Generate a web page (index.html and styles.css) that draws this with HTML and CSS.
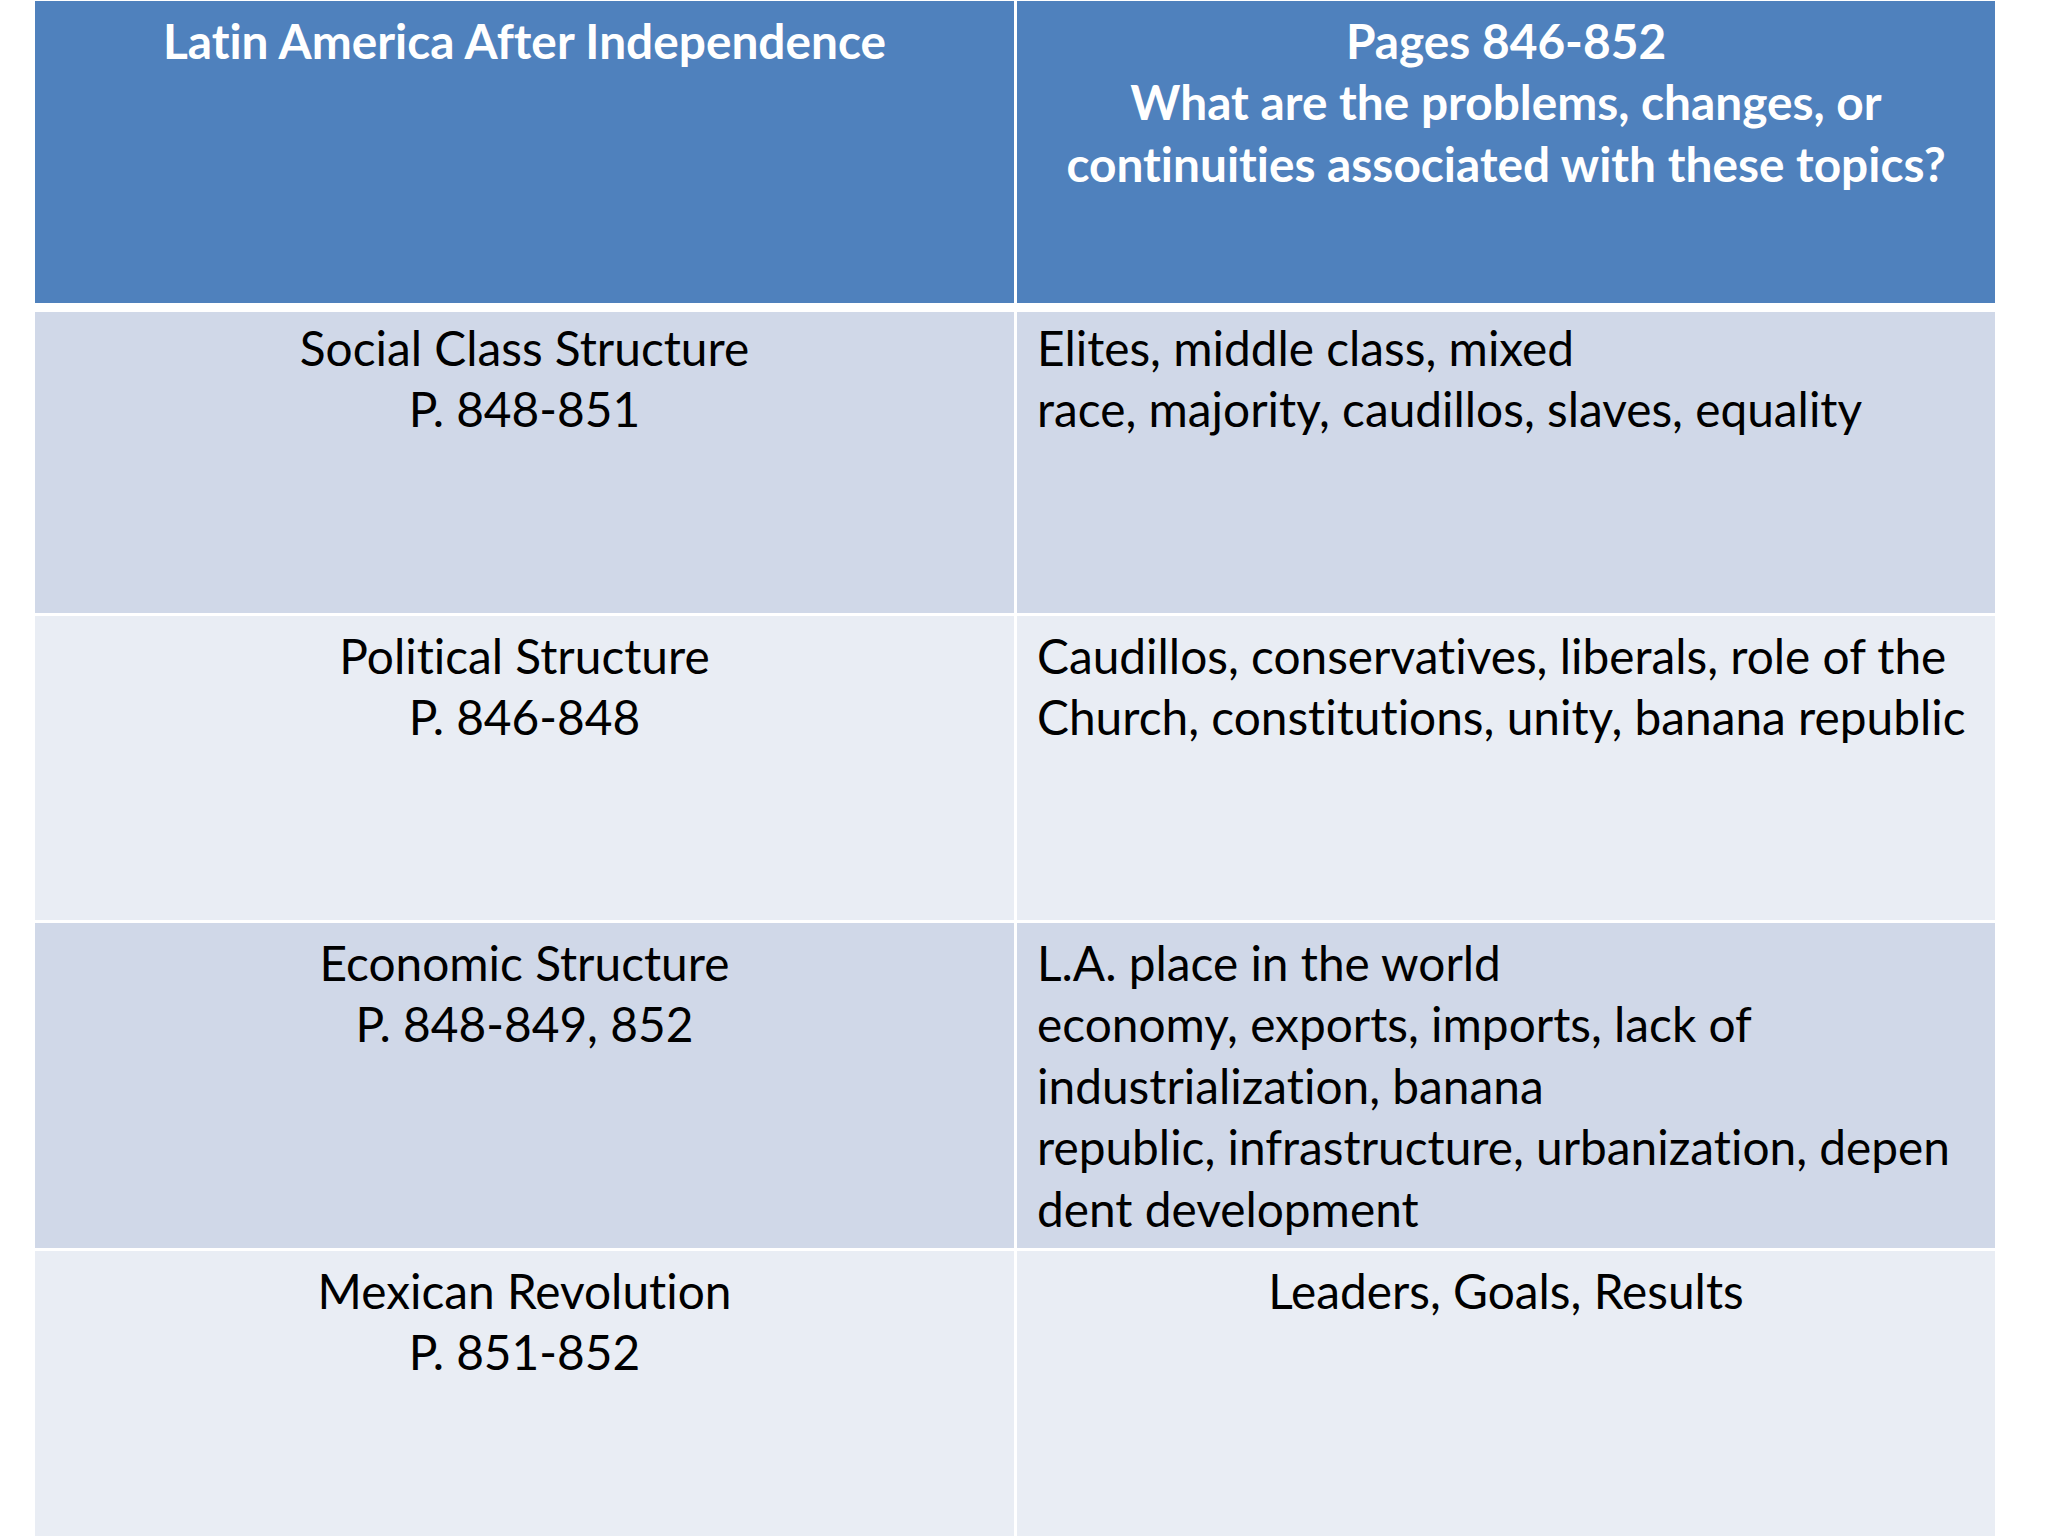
FILE: index.html
```html
<!DOCTYPE html>
<html lang="en">
<head>
<meta charset="utf-8">
<title>Latin America After Independence</title>
<link rel="stylesheet" href="styles.css">
</head>
<body>
<div class="slide">
  <div class="grid">
    <div class="row row-head">
      <div class="cell center">Latin America After Independence</div>
      <div class="cell center">Pages 846-852<br>What are the problems, changes, or<br>continuities associated with these topics?</div>
    </div>
    <div class="row row-odd row-first">
      <div class="cell center">Social Class Structure<br>P. 848-851</div>
      <div class="cell">Elites, middle class, mixed<br>race, majority, caudillos, slaves, equality</div>
    </div>
    <div class="row row-even row-two">
      <div class="cell center">Political Structure<br>P. 846-848</div>
      <div class="cell">Caudillos, conservatives, liberals, role of the<br>Church, constitutions, unity, banana republic</div>
    </div>
    <div class="row row-odd row-three">
      <div class="cell center">Economic Structure<br>P. 848-849, 852</div>
      <div class="cell">L.A. place in the world<br>economy, exports, imports, lack of<br>industrialization, banana<br>republic, infrastructure, urbanization, depen<br>dent development</div>
    </div>
    <div class="row row-even row-four">
      <div class="cell center">Mexican Revolution<br>P. 851-852</div>
      <div class="cell center">Leaders, Goals, Results</div>
    </div>
  </div>
</div>
</body>
</html>
```

FILE: styles.css
```css
html, body {
  margin: 0;
  padding: 0;
  background: #ffffff;
}

.slide {
  width: 2048px;
  height: 1536px;
  overflow: hidden;
  padding: 1px 0 0 35px;
  box-sizing: border-box;
  font-family: "Lato", "Open Sans", sans-serif;
  font-size: 47.8px;
  line-height: 61.4px;
  color: #000000;
  font-variant-ligatures: none;
}

.grid {
  display: flex;
  flex-direction: column;
  width: 1960px;
  gap: 3px;
}

.row {
  display: grid;
  grid-template-columns: 979px 978px;
  column-gap: 3px;
}

.cell {
  padding: 9px 20px 0 20px;
  white-space: nowrap;
  box-sizing: border-box;
}

.center {
  text-align: center;
}

.row-head {
  height: 302px;
  margin-bottom: 6px;
}

.row-head .cell {
  background: #4f81bd;
  color: #ffffff;
  font-weight: 700;
}

.row-odd .cell {
  background: #d0d8e8;
}

.row-even .cell {
  background: #e9edf4;
}

.row-first {
  height: 301px;
}

.row-first .cell {
  padding-top: 5px;
}

.row-two {
  height: 304px;
}

.row-three {
  height: 325px;
}

.row-four {
  height: 300px;
}
```
